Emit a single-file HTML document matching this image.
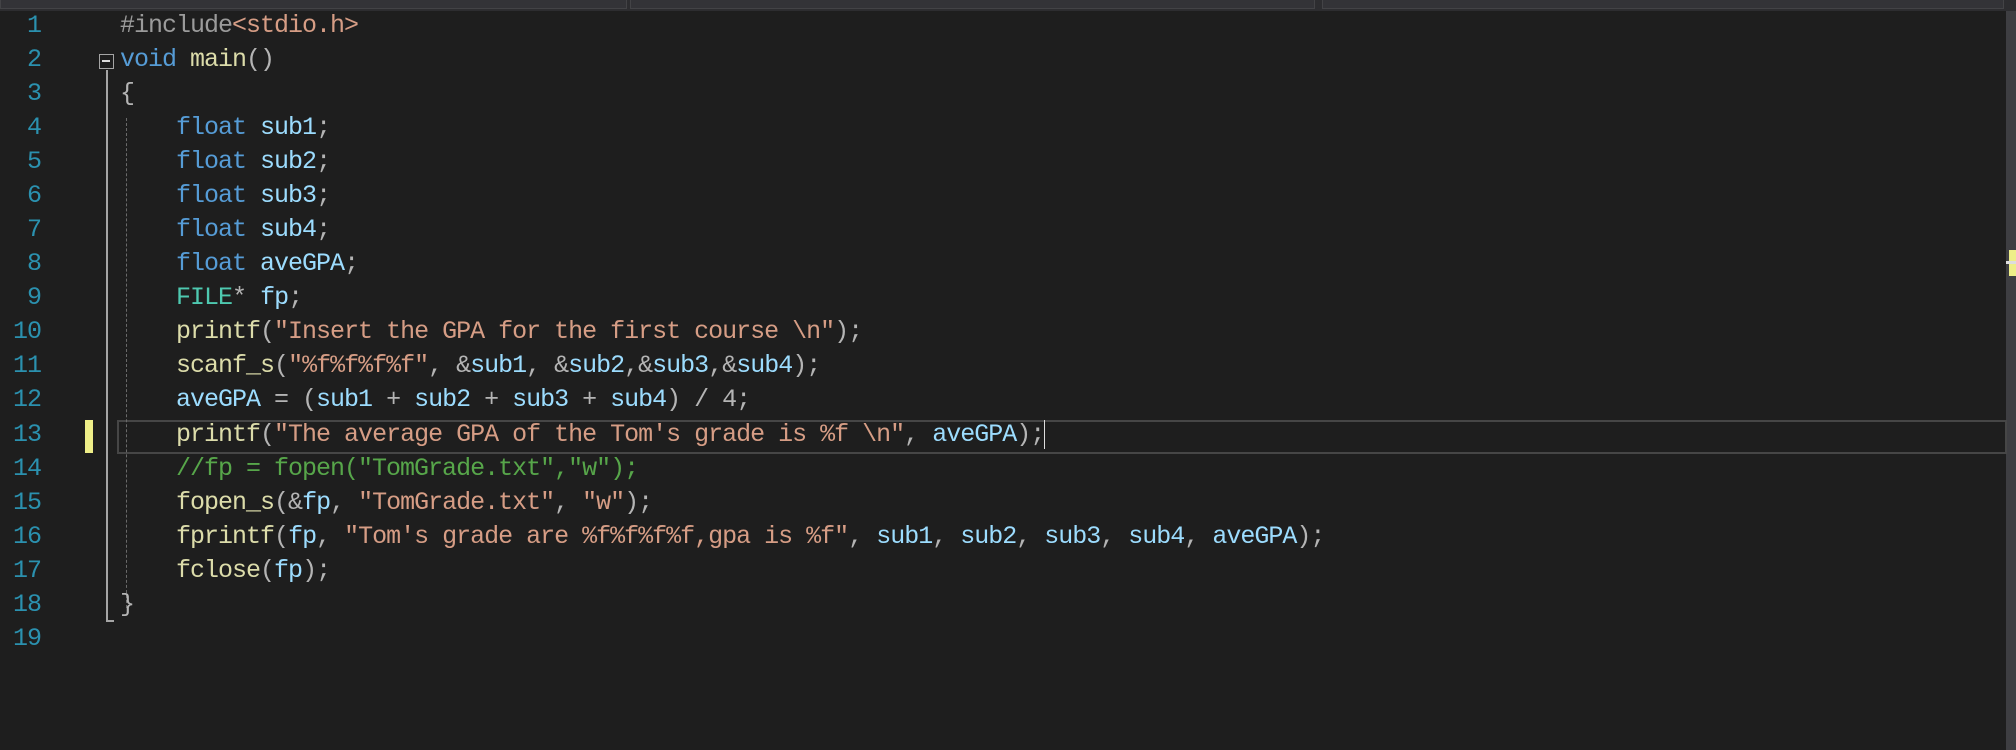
<!DOCTYPE html>
<html><head><meta charset="utf-8"><style>
html,body{margin:0;padding:0;width:2016px;height:750px;background:#1e1e1e;overflow:hidden}
body{position:relative;font-family:"Liberation Mono",monospace;font-size:25px;letter-spacing:-1px}
.top{position:absolute;left:0;top:0;width:2016px;height:11px;background:#2d2d30}
.dd{position:absolute;top:0;height:8px;background:#333337;border:1px solid #434346;border-top:none}
.ln{position:absolute;left:0;width:41px;text-align:right;color:#2b91af;height:34px;line-height:34px}
.cl{position:absolute;left:120px;height:34px;line-height:34px;white-space:pre;color:#dcdcdc}
.k{color:#569cd6}.f{color:#dcdcaa}.v{color:#9cdcfe}.s{color:#d69d85}.c{color:#57a64a}.p{color:#b4b4b4}.pp{color:#9b9b9b}.t{color:#4ec9b0}
</style></head><body>
<div class="top"><div class="dd" style="left:0;width:625px"></div><div class="dd" style="left:630px;width:683px"></div><div class="dd" style="left:1322px;width:680px"></div></div>
<div style="position:absolute;left:2006px;top:11px;width:10px;height:739px;background:#3e3e42"></div>
<div style="position:absolute;left:2009px;top:250px;width:7px;height:26px;background:#eeee88"></div>
<div style="position:absolute;left:2006px;top:261px;width:10px;height:3px;background:#ddd"></div>
<div style="position:absolute;left:117px;top:420px;width:1886px;height:30px;border:2px solid #464646"></div>
<div style="position:absolute;left:85px;top:420px;width:8px;height:33px;background:#eeee88"></div>
<div style="position:absolute;left:99px;top:54px;width:13px;height:13px;border:1px solid #a5a5a5"></div>
<div style="position:absolute;left:102px;top:60px;width:8px;height:2px;background:#dcdcdc"></div>
<div style="position:absolute;left:106px;top:70px;width:2px;height:552px;background:#a5a5a5"></div>
<div style="position:absolute;left:106px;top:620px;width:8px;height:2px;background:#a5a5a5"></div>
<div style="position:absolute;left:126px;top:118px;width:0;height:490px;border-left:1px dashed #6a6a6a"></div>

<div class="ln" style="top:9px">1</div><div class="cl" style="top:9px"><span class="pp">#include</span><span class="s">&lt;stdio.h&gt;</span></div>
<div class="ln" style="top:43px">2</div><div class="cl" style="top:43px"><span class="k">void</span> <span class="f">main</span><span class="p">()</span></div>
<div class="ln" style="top:77px">3</div><div class="cl" style="top:77px"><span class="p">{</span></div>
<div class="ln" style="top:111px">4</div><div class="cl" style="top:111px">    <span class="k">float</span> <span class="v">sub1</span><span class="p">;</span></div>
<div class="ln" style="top:145px">5</div><div class="cl" style="top:145px">    <span class="k">float</span> <span class="v">sub2</span><span class="p">;</span></div>
<div class="ln" style="top:179px">6</div><div class="cl" style="top:179px">    <span class="k">float</span> <span class="v">sub3</span><span class="p">;</span></div>
<div class="ln" style="top:213px">7</div><div class="cl" style="top:213px">    <span class="k">float</span> <span class="v">sub4</span><span class="p">;</span></div>
<div class="ln" style="top:247px">8</div><div class="cl" style="top:247px">    <span class="k">float</span> <span class="v">aveGPA</span><span class="p">;</span></div>
<div class="ln" style="top:281px">9</div><div class="cl" style="top:281px">    <span class="t">FILE</span><span class="p">*</span> <span class="v">fp</span><span class="p">;</span></div>
<div class="ln" style="top:315px">10</div><div class="cl" style="top:315px">    <span class="f">printf</span><span class="p">(</span><span class="s">"Insert the GPA for the first course \n"</span><span class="p">);</span></div>
<div class="ln" style="top:349px">11</div><div class="cl" style="top:349px">    <span class="f">scanf_s</span><span class="p">(</span><span class="s">"%f%f%f%f"</span><span class="p">, &amp;</span><span class="v">sub1</span><span class="p">, &amp;</span><span class="v">sub2</span><span class="p">,&amp;</span><span class="v">sub3</span><span class="p">,&amp;</span><span class="v">sub4</span><span class="p">);</span></div>
<div class="ln" style="top:383px">12</div><div class="cl" style="top:383px">    <span class="v">aveGPA</span><span class="p"> = (</span><span class="v">sub1</span><span class="p"> + </span><span class="v">sub2</span><span class="p"> + </span><span class="v">sub3</span><span class="p"> + </span><span class="v">sub4</span><span class="p">) / 4;</span></div>
<div class="ln" style="top:418px">13</div><div class="cl" style="top:418px">    <span class="f">printf</span><span class="p">(</span><span class="s">"The average GPA of the Tom's grade is %f \n"</span><span class="p">, </span><span class="v">aveGPA</span><span class="p">);</span><span style="border-left:1px solid #ddd"></span></div>
<div class="ln" style="top:452px">14</div><div class="cl" style="top:452px">    <span class="c">//fp = fopen("TomGrade.txt","w");</span></div>
<div class="ln" style="top:486px">15</div><div class="cl" style="top:486px">    <span class="f">fopen_s</span><span class="p">(&amp;</span><span class="v">fp</span><span class="p">, </span><span class="s">"TomGrade.txt"</span><span class="p">, </span><span class="s">"w"</span><span class="p">);</span></div>
<div class="ln" style="top:520px">16</div><div class="cl" style="top:520px">    <span class="f">fprintf</span><span class="p">(</span><span class="v">fp</span><span class="p">, </span><span class="s">"Tom's grade are %f%f%f%f,gpa is %f"</span><span class="p">, </span><span class="v">sub1</span><span class="p">, </span><span class="v">sub2</span><span class="p">, </span><span class="v">sub3</span><span class="p">, </span><span class="v">sub4</span><span class="p">, </span><span class="v">aveGPA</span><span class="p">);</span></div>
<div class="ln" style="top:554px">17</div><div class="cl" style="top:554px">    <span class="f">fclose</span><span class="p">(</span><span class="v">fp</span><span class="p">);</span></div>
<div class="ln" style="top:588px">18</div><div class="cl" style="top:588px"><span class="p">}</span></div>
<div class="ln" style="top:622px">19</div>
</body></html>
